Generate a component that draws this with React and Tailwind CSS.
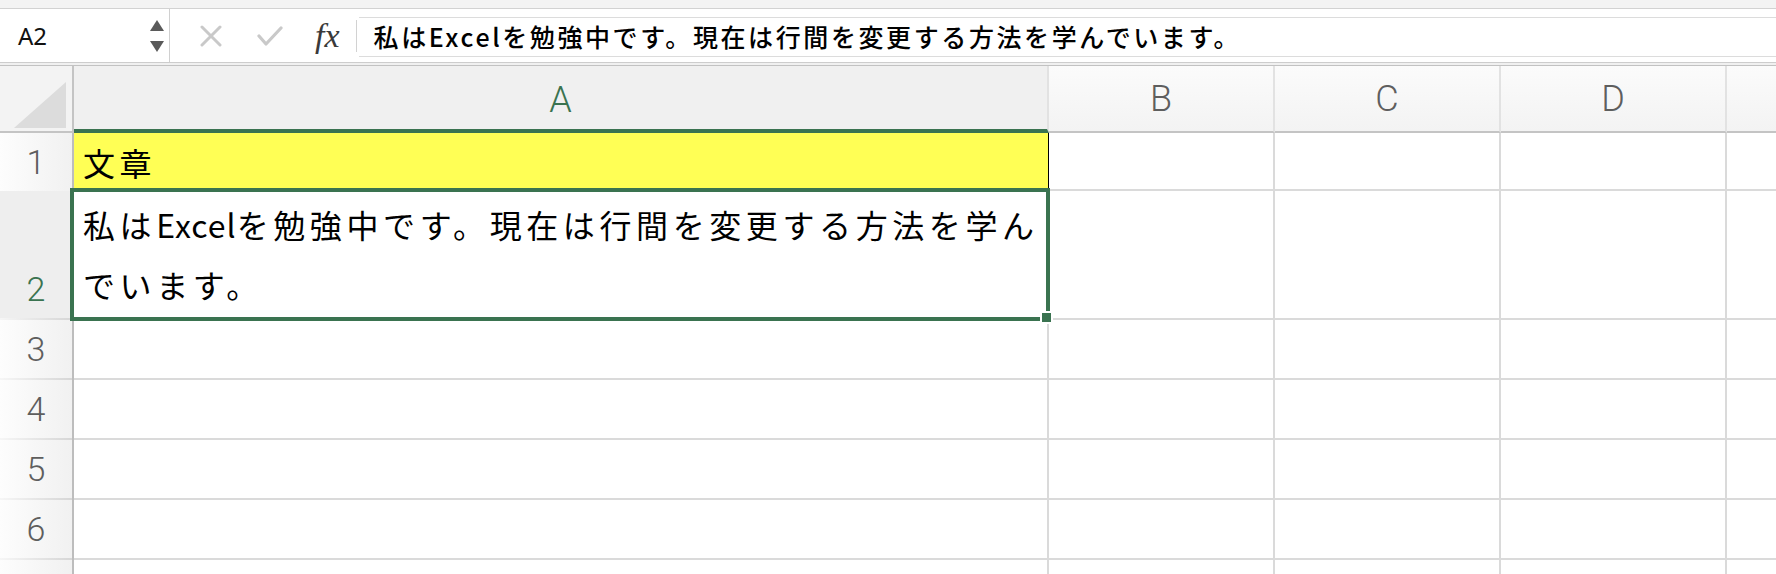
import React from 'react';

const cjk = { fontFamily: '"Noto Sans CJK JP", "Noto Sans", sans-serif' };
const head = { fontFamily: 'Roboto, "Liberation Sans", sans-serif' };

const cols = [
  { key: 'A', w: 'w-[975px]' },
  { key: 'B', w: 'w-[226px]' },
  { key: 'C', w: 'w-[226px]' },
  { key: 'D', w: 'w-[226px]' },
];

const RowHead = ({ n, h, active }) => (
  <div className={`w-[74px] shrink-0 flex flex-col border-r-2 border-[#bdbdbd] ${h} ${active ? 'bg-[#eeeeee]' : 'bg-gradient-to-r from-[#fdfdfd] to-[#f1f1f1]'}`}>
    <div className="flex-1 flex items-end justify-center">
      {n && (
        <span
          className={`h-[58px] flex items-center text-[34px] font-light ${active ? 'text-[#3a7350]' : 'text-[#5e5e5e]'}`}
          style={head}
        >
          {n}
        </span>
      )}
    </div>
    <div className="h-[2px] bg-gradient-to-r from-[#f6f6f6] to-[#d6d6d6]" />
  </div>
);

const EmptyRow = ({ n }) => (
  <div className="flex h-[60px]">
    <RowHead n={n} h="h-[60px]" />
    {cols.map((c) => (
      <div key={c.key} className={`${c.w} shrink-0 border-r-2 border-b-2 border-[#dadada]`} />
    ))}
    <div className="flex-1 border-b-2 border-[#dadada]" />
  </div>
);

export default function App() {
  return (
    <div className="w-[1776px] h-[574px] overflow-hidden bg-white">
      {/* top band */}
      <div className="h-[9px] bg-[#f3f3f3] border-b border-[#d2d2d2]" />

      {/* formula bar */}
      <div className="flex h-[54px] bg-white border-b border-[#cdcdcd]">
        <div className="w-[170px] shrink-0 flex items-center border-r border-[#d0d0d0] pl-[18px] pr-[4px]">
          <span className="flex-1 text-[24px] text-[#111]" style={{ fontFamily: '"Noto Sans", sans-serif' }}>A2</span>
          <div className="flex flex-col gap-[10px] mr-[1px]">
            <svg width="14" height="11" viewBox="0 0 14 11"><polygon points="7,0 14,11 0,11" fill="#5a5a5a" /></svg>
            <svg width="14" height="11" viewBox="0 0 14 11"><polygon points="0,0 14,0 7,11" fill="#5a5a5a" /></svg>
          </div>
        </div>
        <div className="flex items-center pl-[30px] gap-[35px]">
          <svg width="22" height="22" viewBox="0 0 22 22">
            <path d="M2 2 L20 20 M20 2 L2 20" stroke="#c9c9c9" strokeWidth="3" strokeLinecap="round" />
          </svg>
          <svg width="26" height="22" viewBox="0 0 26 22">
            <path d="M2 11 L9 19 L24 3" stroke="#c9c9c9" strokeWidth="3.2" fill="none" strokeLinecap="round" strokeLinejoin="round" />
          </svg>
        </div>
        <span
          className="ml-[32px] self-center text-[34px] italic text-[#3a3a3a] leading-none"
          style={{ fontFamily: '"Liberation Serif", serif' }}
        >
          fx
        </span>
        <div className="ml-[16px] w-px h-[32px] self-center bg-[#d2d2d2]" />
        <div className="flex-1 ml-[2px] mt-[8px] h-[40px] border-y border-[#dcdcdc] flex items-center pl-[15px]">
          <span className="text-[25px] tracking-[2.6px] text-black whitespace-nowrap font-medium" style={cjk}>
            私はExcelを勉強中です。現在は行間を変更する方法を学んでいます。
          </span>
        </div>
      </div>

      <div className="h-[2px] bg-[#f0f0f0]" />

      {/* column headers */}
      <div className="flex h-[68px] border-t border-[#c2c2c2]">
        <div className="w-[74px] shrink-0 bg-[#f3f3f3] border-r-2 border-b-2 border-[#c4c4c4] flex items-end justify-end pr-[6px] pb-[3px]">
          <svg width="52" height="46" viewBox="0 0 52 46">
            <polygon points="52,0 52,46 0,46" fill="#dcdcdc" />
          </svg>
        </div>
        {cols.map((c) => (
          <div
            key={c.key}
            className={`${c.w} shrink-0 flex items-center justify-center border-r-2 ${
              c.key === 'A'
                ? 'bg-[#f0f0f0] border-r-[#e2e2e2] border-b-4 border-b-[#3a7350]'
                : 'bg-gradient-to-b from-[#fbfbfb] to-[#f3f3f3] border-r-[#e2e2e2] border-b-2 border-b-[#c4c4c4]'
            }`}
          >
            <span
              className={`text-[36px] font-light ${c.key === 'A' ? 'text-[#3a7350] pt-[4px]' : 'text-[#5e5e5e]'}`}
              style={head}
            >
              {c.key}
            </span>
          </div>
        ))}
        <div className="flex-1 bg-gradient-to-b from-[#fbfbfb] to-[#f3f3f3] border-b-2 border-[#c4c4c4]" />
      </div>

      {/* row 1 */}
      <div className="flex h-[58px]">
        <RowHead n="1" h="h-[58px]" />
        <div className="w-[975px] shrink-0 bg-[#ffff55] border-r border-black flex items-center pl-[9px]">
          <span className="text-[32px] tracking-[4.5px] text-black" style={cjk}>文章</span>
        </div>
        {cols.slice(1).map((c) => (
          <div key={c.key} className={`${c.w} shrink-0 border-r-2 border-b-2 border-[#dadada]`} />
        ))}
        <div className="flex-1 border-b-2 border-[#dadada]" />
      </div>

      {/* row 2 */}
      <div className="flex h-[129px]">
        <RowHead n="2" h="h-[129px]" active />
        <div className="relative w-[975px] shrink-0 border-r-2 border-b-2 border-[#dadada] pl-[9px] pt-[3px]">
          <div className="text-[32px] tracking-[4.6px] leading-[60px] text-black whitespace-nowrap" style={cjk}>
            私は<span className="tracking-[1px]">Excel</span>を勉強中です。現在は行間を変更する方法を学ん
            <br />
            でいます。
          </div>
          <div className="absolute -left-[4px] -top-[3px] -right-[3px] -bottom-[3px] border-4 border-[#3a7350]" />
          <div className="absolute -right-[6px] -bottom-[6px] w-[13px] h-[13px] bg-[#3a7350] border-2 border-white" />
        </div>
        {cols.slice(1).map((c) => (
          <div key={c.key} className={`${c.w} shrink-0 border-r-2 border-b-2 border-[#dadada]`} />
        ))}
        <div className="flex-1 border-b-2 border-[#dadada]" />
      </div>

      <EmptyRow n="3" />
      <EmptyRow n="4" />
      <EmptyRow n="5" />
      <EmptyRow n="6" />
      <EmptyRow />
    </div>
  );
}
